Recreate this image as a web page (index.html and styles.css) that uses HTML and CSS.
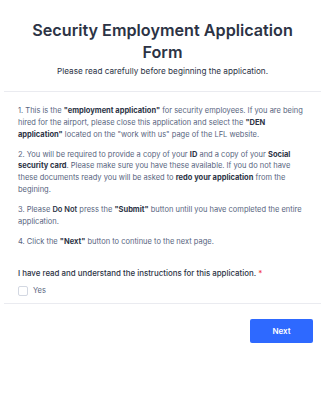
FILE: index.html
```html
<!DOCTYPE html>
<html lang="en">
<head>
<meta charset="UTF-8">
<meta name="viewport" content="width=device-width, initial-scale=1.0">
<title>Security Employment Application Form</title>
<link rel="stylesheet" href="styles.css">
</head>
<body>
<div class="form-card">
  <div class="form-header">
    <h1 class="form-title">Security Employment Application Form</h1>
    <p class="form-subtitle">Please read carefully before beginning the application.</p>
  </div>

  <div class="instructions">
    <p>1. This is the <b>"employment application"</b> for security employees. If you are being hired for the airport, please close this application and select the <b>"DEN application"</b> located on the "work with us" page of the LFL website.</p>
    <p>2. You will be required to provide a copy of your <b>ID</b> and a copy of your <b>Social security card</b>. Please make sure you have these available. If you do not have these documents ready you will be asked to <b>redo your application</b> from the begining.</p>
    <p>3. Please <b class="plain">Do Not</b> press the <b>"Submit"</b> button untill you have completed the entire application.</p>
    <p>4. Click the <b>"Next"</b> button to continue to the next page.</p>
  </div>

  <div class="question">
    <label class="question-label">I have read and understand the instructions for this application. <span class="required">*</span></label>
    <label class="check-row">
      <span class="checkbox"></span>
      <span>Yes</span>
    </label>
  </div>

  <div class="form-footer">
    <button class="next-btn">Next</button>
  </div>
</div>
</body>
</html>
```

FILE: styles.css
```css
* {
  margin: 0;
  padding: 0;
  box-sizing: border-box;
}

body {
  background: #fff;
  font-family: Inter, "Noto Sans", Arial, sans-serif;
  color: #2c3345;
}

.form-card {
  margin: 0 4px;
}

/* Header */
.form-header {
  padding: 19px 20px 14px;
  text-align: center;
  border-bottom: 1px solid #eaebf0;
}

.form-title {
  font-size: 16.2px;
  line-height: 22px;
  font-weight: 600;
  color: #2c3345;
}

.form-subtitle {
  margin-top: 2px;
  font-size: 8.2px;
  line-height: 12px;
  color: #2c3345;
}

/* Instructions */
.instructions {
  padding: 13px 14px 0;
  font-size: 7.5px;
  line-height: 11.8px;
  color: #57647e;
}

.instructions p + p {
  margin-top: 8.3px;
}

.instructions b {
  font-weight: 700;
  color: #2c3345;
}

.instructions b.plain {
  font-weight: 600;
}

/* Question */
.question {
  padding: 19px 14px 7px;
  border-bottom: 1px solid #eaebf0;
}

.question-label {
  display: block;
  font-size: 7.9px;
  line-height: 12px;
  font-weight: 500;
  color: #2c3345;
}

.required {
  color: #f23a3c;
}

.check-row {
  display: flex;
  align-items: center;
  gap: 5px;
  margin-top: 7px;
  font-size: 7.5px;
  color: #57647e;
}

.checkbox {
  width: 10px;
  height: 10px;
  border: 1px solid #d3d8e2;
  border-radius: 2px;
}

/* Footer */
.form-footer {
  display: flex;
  justify-content: flex-end;
  padding: 15px 8px 0;
}

.next-btn {
  width: 63px;
  height: 24px;
  background: #2e69ff;
  border: none;
  border-radius: 2px;
  color: #fff;
  font-family: inherit;
  font-size: 8px;
  font-weight: 600;
}
```
